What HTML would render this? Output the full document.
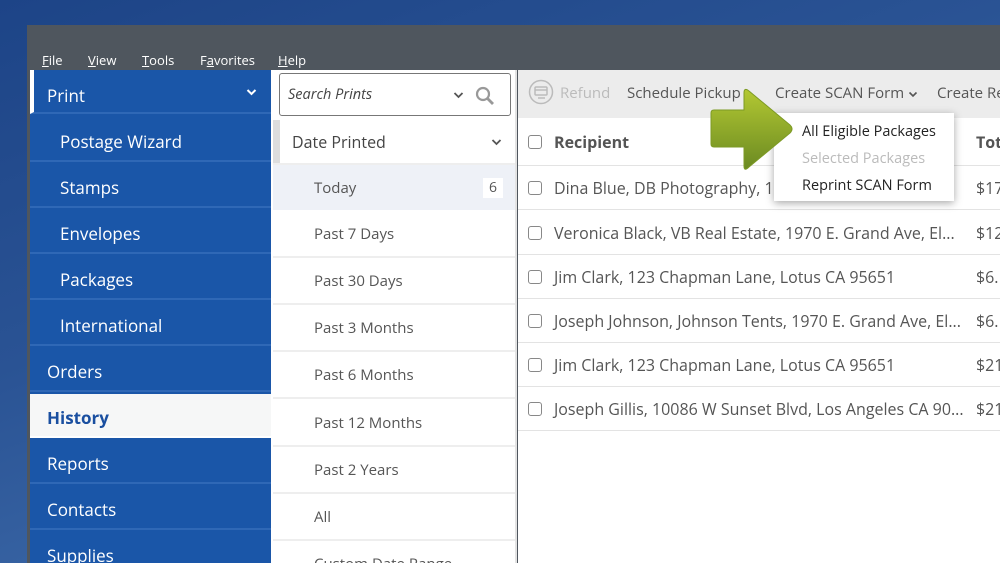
<!DOCTYPE html>
<html style="width:1000px;height:563px;overflow:hidden"><head><meta charset="utf-8"><style>
*{margin:0;padding:0;box-sizing:border-box}
body{width:1000px;height:563px;overflow:hidden;position:relative;font-family:"Open Sans","Liberation Sans","DejaVu Sans",sans-serif;background:linear-gradient(160deg,#1d4487 0%,#2a5394 40%,#4a7ab8 100%)}
.a{position:absolute}
.win{left:27px;top:25px;width:973px;height:538px;background:#4f565e}
.menu span{position:absolute;top:51px;color:#fff;font-size:13px}
.side{left:30px;top:70px;width:241px;height:493px;background:#1a56a8}
.si{position:absolute;left:30px;width:241px;height:44px;color:#fff;font-size:17px;line-height:48px;border-bottom:2px solid #2f68b6}
.mid{left:271px;top:70px;width:246px;height:493px;background:#fff;border-right:2px solid #e3e3e3}
.mi{position:absolute;left:273px;width:242px;height:47px;font-size:15px;color:#555;line-height:47px;padding-left:41px;border-bottom:2px solid #eee}
.main{left:518px;top:70px;width:482px;height:493px;background:#fff}
.tb{left:518px;top:70px;width:482px;height:48px;background:#ececec;font-size:15px;color:#555;white-space:nowrap;overflow:hidden}
.row{position:absolute;left:518px;width:482px;height:44px;border-bottom:1px solid #e3e3e3;font-size:16px;color:#555;line-height:44px;white-space:nowrap;overflow:hidden}
.cb{position:absolute;left:10px;top:15px;width:14px;height:14px;border:1.5px solid #888;border-radius:3px}
.row .t{position:absolute;left:36px}
.row .p{position:absolute;left:458px}
.chev{position:absolute}
</style></head><body>
<div class="a win"></div>
<div class="menu"><span style="left:42px"><u>F</u>ile</span><span style="left:88px"><u>V</u>iew</span><span style="left:142px"><u>T</u>ools</span><span style="left:200px">F<u>a</u>vorites</span><span style="left:278px"><u>H</u>elp</span></div>
<div class="a side"></div>
<div class="si" style="top:70px;border-left:4px solid #fff;padding-left:13px;line-height:52px">Print<svg class="chev" style="right:14px;top:18px" width="11" height="8" viewBox="0 0 11 8"><path d="M1.5 2l4 4 4-4" fill="none" stroke="#fff" stroke-width="2"/></svg></div>
<div class="si" style="top:118px;padding-left:30px">Postage Wizard</div>
<div class="si" style="top:164px;padding-left:30px">Stamps</div>
<div class="si" style="top:210px;padding-left:30px">Envelopes</div>
<div class="si" style="top:256px;padding-left:30px">Packages</div>
<div class="si" style="top:302px;padding-left:30px">International</div>
<div class="si" style="top:348px;padding-left:17px">Orders</div>
<div class="si" style="top:394px;padding-left:17px;background:#f6f7f7;color:#1a4fa0;font-weight:bold;border-bottom:2px solid #fff">History</div>
<div class="si" style="top:440px;padding-left:17px">Reports</div>
<div class="si" style="top:486px;padding-left:17px">Contacts</div>
<div class="si" style="top:532px;padding-left:17px;height:31px;border:0">Supplies</div>
<div class="a mid"></div>
<div class="a" style="left:279px;top:73px;width:232px;height:43px;border:1.5px solid #777;border-radius:3px;background:#fff;font-size:14.5px;font-style:italic;color:#444;line-height:42px;padding-left:8px">Search Prints
<svg class="chev" style="left:173px;top:17px" width="11" height="8" viewBox="0 0 11 8"><path d="M1.5 2l4 4 4-4" fill="none" stroke="#555" stroke-width="1.8"/></svg>
<svg class="a" style="left:194px;top:11px" width="22" height="22" viewBox="0 0 22 22"><circle cx="9" cy="9" r="6" fill="none" stroke="#999" stroke-width="2.2"/><path d="M13.5 13.5L19 19" stroke="#999" stroke-width="2.8"/></svg></div>
<div class="a" style="left:273px;top:120px;width:7px;height:44px;background:#ddd"></div>
<div class="mi" style="top:119px;padding-left:19px;font-size:16px;color:#444;height:46px">Date Printed<svg class="chev" style="right:13px;top:19px" width="11" height="8" viewBox="0 0 11 8"><path d="M1.5 2l4 4 4-4" fill="none" stroke="#555" stroke-width="1.8"/></svg></div>
<div class="mi" style="top:165px;background:#eef1f7;border-bottom:2px solid #fff">Today<span style="position:absolute;right:12px;top:13px;width:20px;height:20px;background:#fff;line-height:20px;text-align:center;font-size:14px">6</span></div>
<div class="mi" style="top:211px">Past 7 Days</div>
<div class="mi" style="top:258px">Past 30 Days</div>
<div class="mi" style="top:305px">Past 3 Months</div>
<div class="mi" style="top:352px">Past 6 Months</div>
<div class="mi" style="top:400px">Past 12 Months</div>
<div class="mi" style="top:447px">Past 2 Years</div>
<div class="mi" style="top:494px">All</div>
<div class="mi" style="top:541px;height:22px;border:0">Custom Date Range</div>
<div class="a main"></div>
<div class="a tb">
<svg class="a" style="left:10px;top:9px" width="26" height="26" viewBox="0 0 26 26"><circle cx="13" cy="13" r="11.5" fill="none" stroke="#bbb" stroke-width="1.5"/><rect x="7" y="8" width="12" height="8" rx="1" fill="none" stroke="#bbb" stroke-width="1.5"/><path d="M7 11h12M10 19h7" stroke="#bbb" stroke-width="1.5"/></svg>
<span class="a" style="left:42px;top:13px;color:#bbb">Refund</span>
<span class="a" style="left:109px;top:13px">Schedule Pickup</span>
<span class="a" style="left:257px;top:13px">Create SCAN Form</span>
<svg class="chev" style="left:390px;top:21px" width="10" height="7" viewBox="0 0 10 7"><path d="M1.5 1.5l3.5 3.5 3.5-3.5" fill="none" stroke="#555" stroke-width="1.6"/></svg>
<span class="a" style="left:419px;top:13px">Create Re</span>
</div>
<div class="row" style="top:118px;height:48px;line-height:48px"><div class="cb" style="top:17px"></div><span class="t" style="font-weight:bold;color:#555">Recipient</span><span class="p" style="font-weight:bold">Tot</span></div>
<div class="row" style="top:166px"><div class="cb"></div><span class="t">Dina Blue, DB Photography, 1970</span><span class="p">$17</span></div>
<div class="row" style="top:211px"><div class="cb"></div><span class="t">Veronica Black, VB Real Estate, 1970 E. Grand Ave, El...</span><span class="p">$12</span></div>
<div class="row" style="top:255px"><div class="cb"></div><span class="t">Jim Clark, 123 Chapman Lane, Lotus CA 95651</span><span class="p">$6.</span></div>
<div class="row" style="top:299px"><div class="cb"></div><span class="t">Joseph Johnson, Johnson Tents, 1970 E. Grand Ave, El...</span><span class="p">$6.</span></div>
<div class="row" style="top:343px"><div class="cb"></div><span class="t">Jim Clark, 123 Chapman Lane, Lotus CA 95651</span><span class="p">$21</span></div>
<div class="row" style="top:387px"><div class="cb"></div><span class="t">Joseph Gillis, 10086 W Sunset Blvd, Los Angeles CA 90...</span><span class="p">$21</span></div>
<div class="a" style="left:774px;top:113px;width:180px;height:88px;background:#fff;box-shadow:0 2px 8px rgba(0,0,0,.35);font-size:14.5px;color:#222">
<div class="a" style="left:28px;top:9px">All Eligible Packages</div>
<div class="a" style="left:28px;top:36px;color:#bbb">Selected Packages</div>
<div class="a" style="left:28px;top:63px">Reprint SCAN Form</div>
</div>
<svg class="a" style="left:708px;top:86px" width="90" height="90" viewBox="0 0 90 90"><defs><linearGradient id="g" x1="0" y1="0" x2="0" y2="1"><stop offset="0" stop-color="#b3c832"/><stop offset="1" stop-color="#6b8a22"/></linearGradient></defs><path d="M6 24 Q3 24 3 27 V58 Q3 61 6 61 H36 V80 Q36 86 41 81 L82 47 Q86 43 82 39 L41 5 Q36 1 36 7 V24 Z" fill="url(#g)" stroke="#7d9a25" stroke-width="1"/></svg>
</body></html>
